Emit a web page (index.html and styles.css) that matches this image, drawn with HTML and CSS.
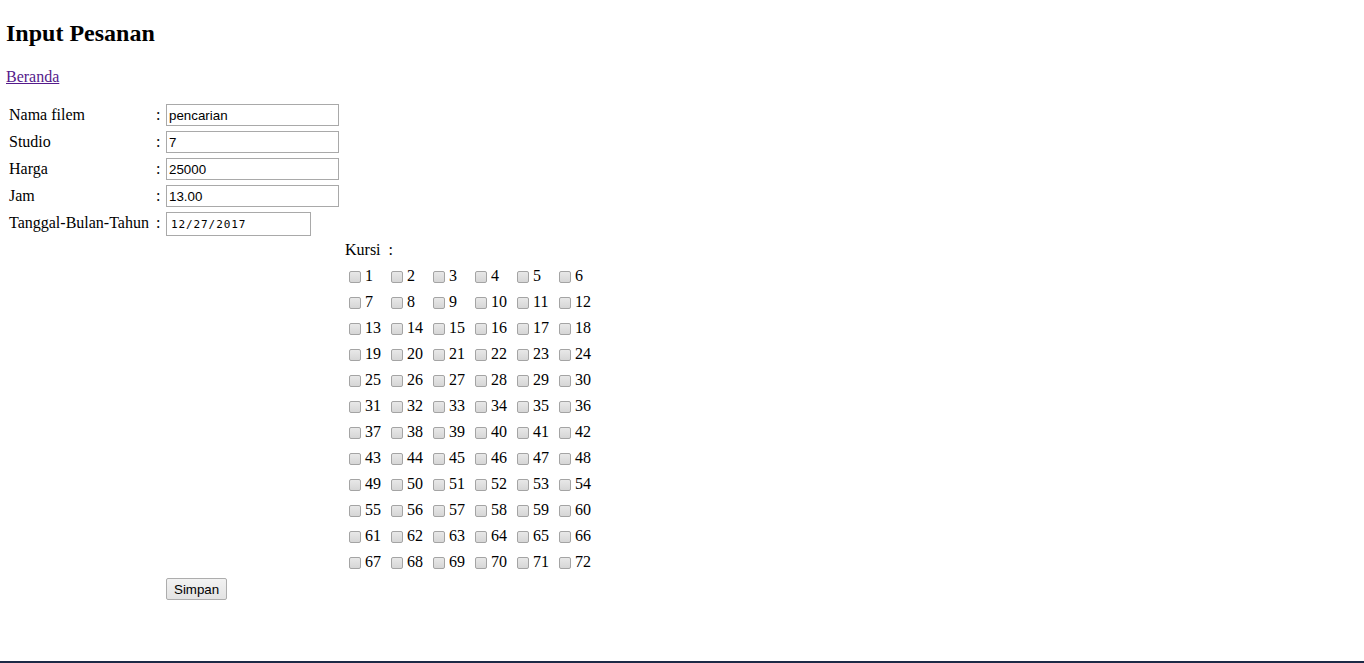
FILE: index.html
```html
<!DOCTYPE html>
<html lang="id">
<head>
  <meta charset="UTF-8">
  <title>Input Pesanan</title>
  <link rel="stylesheet" href="styles.css">
</head>
<body>
<h2>Input Pesanan</h2>
<p class="nav"><a href="#">Beranda</a></p>

<form class="form" id="form">
  <label class="label" for="filem">Nama filem</label>
  <span class="colon">:</span>
  <input class="text" id="filem" type="text" value="pencarian">

  <label class="label" for="studio">Studio</label>
  <span class="colon">:</span>
  <input class="text" id="studio" type="text" value="7">

  <label class="label" for="harga">Harga</label>
  <span class="colon">:</span>
  <input class="text" id="harga" type="text" value="25000">

  <label class="label" for="jam">Jam</label>
  <span class="colon">:</span>
  <input class="text" id="jam" type="text" value="13.00">

  <label class="label" for="tanggal">Tanggal-Bulan-Tahun</label>
  <span class="colon">:</span>
  <input class="text date" id="tanggal" type="text" value="12/27/2017">

  <div class="kursi">
    <div class="kursi-title">Kursi&nbsp; :</div>
    <div class="seats" id="seats"></div>
  </div>

  <div class="actions">
    <button class="btn" type="button">Simpan</button>
  </div>
</form>

<div class="taskbar"></div>

<script>
  // isi daftar kursi 1 - 72
  var seats = document.getElementById("seats");
  var html = "";
  for (var i = 1; i <= 72; i++) {
    html += '<label class="seat"><input type="checkbox" name="kursi[]" value="' + i + '">' + i + '</label>';
  }
  seats.innerHTML = html;
</script>
</body>
</html>
```

FILE: styles.css
```css
body {
  margin: 0 6px;
  font-family: "Liberation Serif", "Times New Roman", serif;
  font-size: 16px;
  color: #000;
  background: #fff;
}

h2 {
  margin: 20px 0 21px;
  font-size: 24px;
  line-height: 27px;
}

.nav {
  margin: 0 0 17px;
  line-height: 18px;
}

.nav a {
  color: #551a8b;
}

.form {
  display: grid;
  grid-template-columns: 146px 11px 179px auto;
  align-items: baseline;
  row-gap: 3px;
  margin-left: 3px;
}

.label {
  grid-column: 1;
  line-height: 18px;
}

.colon {
  grid-column: 2;
  padding-left: 1px;
  line-height: 18px;
}

.text {
  grid-column: 3;
  box-sizing: border-box;
  width: 173px;
  height: 22px;
  margin: 1px 0;
  padding: 0 2px;
  border: 1px solid #a9a9a9;
  font-family: "Liberation Sans", Arial, sans-serif;
  font-size: 13.33px;
  color: #000;
  outline: none;
}

.text.date {
  width: 145px;
  height: 24px;
  margin: 1px 0 0;
  padding: 0 4px;
  font-family: "DejaVu Sans Mono", monospace;
  font-size: 11px;
  letter-spacing: 0.9px;
}

.kursi {
  grid-column: 4;
  grid-row: 6;
  align-self: start;
}

.kursi-title {
  padding-top: 2px;
  line-height: 18px;
}

.seats {
  display: grid;
  grid-template-columns: repeat(6, 42px);
  grid-auto-rows: 26px;
  margin-top: 4px;
}

.seat {
  display: flex;
  align-items: center;
  line-height: 18px;
  white-space: nowrap;
}

.seat input {
  -webkit-appearance: none;
  appearance: none;
  box-sizing: border-box;
  width: 12px;
  height: 12px;
  margin: 1px 4px 0 4px;
  border: 1px solid #a4a4a4;
  border-radius: 2px;
  background: linear-gradient(#e8e8e8, #d6d6d6);
}

.seat input:checked {
  box-shadow: inset 0 0 0 2px #e8e8e8, inset 0 0 0 6px #333;
}

.actions {
  grid-column: 3;
  grid-row: 7;
}

.btn {
  box-sizing: border-box;
  height: 22px;
  padding: 0 7px;
  border: 1px solid #adadad;
  border-radius: 2px;
  background: linear-gradient(#f2f2f2, #e3e3e3);
  font-family: "Liberation Sans", Arial, sans-serif;
  font-size: 13.33px;
  color: #000;
}

.taskbar {
  position: fixed;
  left: 0;
  right: 0;
  bottom: 0;
  height: 2px;
  background: #1c2a46;
}
```
